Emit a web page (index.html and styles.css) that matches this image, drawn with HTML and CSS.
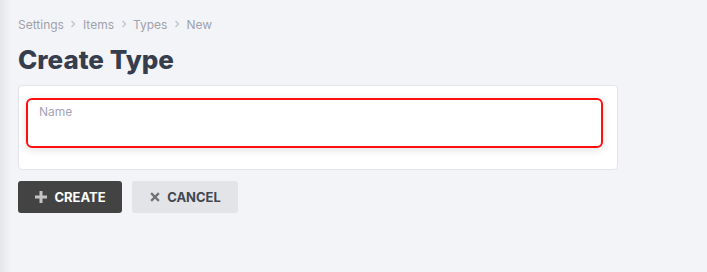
FILE: index.html
```html
<!DOCTYPE html>
<html>
<head>
<meta charset="utf-8">
<link rel="stylesheet" href="styles.css">
</head>
<body>
<div class="page">
  <nav class="crumbs">
    <span>Settings</span>
    <svg class="sep" viewBox="0 0 10 10"><path d="M3.5 2 L6.5 5 L3.5 8" fill="none" stroke="currentColor" stroke-width="1.3"/></svg>
    <span>Items</span>
    <svg class="sep" viewBox="0 0 10 10"><path d="M3.5 2 L6.5 5 L3.5 8" fill="none" stroke="currentColor" stroke-width="1.3"/></svg>
    <span>Types</span>
    <svg class="sep" viewBox="0 0 10 10"><path d="M3.5 2 L6.5 5 L3.5 8" fill="none" stroke="currentColor" stroke-width="1.3"/></svg>
    <span>New</span>
  </nav>
  <h1 class="title">Create Type</h1>
  <div class="card">
    <label class="field">
      <span class="label">Name</span>
    </label>
  </div>
  <div class="actions">
    <button class="btn btn-primary">
      <svg class="ico" viewBox="0 0 14 14"><path d="M7 1 V13 M1 7 H13" stroke="currentColor" stroke-width="3" fill="none"/></svg>
      CREATE
    </button>
    <button class="btn btn-secondary">
      <svg class="ico" viewBox="0 0 14 14"><path d="M2.5 2.5 L11.5 11.5 M11.5 2.5 L2.5 11.5" stroke="currentColor" stroke-width="2.6" fill="none"/></svg>
      CANCEL
    </button>
  </div>
</div>
</body>
</html>
```
FILE: styles.css
```css
html, body {
  margin: 0;
  height: 100%;
}
body {
  background: #f3f4f8;
  font-family: Inter, "Noto Sans", sans-serif;
  box-shadow: inset 12px 0 10px -8px rgba(0, 0, 0, 0.07);
}
.page {
  padding: 15px 18px 0 18px;
  width: 600px;
}
.crumbs {
  display: flex;
  align-items: center;
  gap: 4.5px;
  font-size: 12px;
  color: #a0a2ab;
  height: 18px;
}
.sep {
  width: 10px;
  height: 10px;
  color: #c0c2c8;
}
.title {
  margin: 11px 0 0 0;
  font-size: 26px;
  font-weight: 800;
  color: #363d4d;
  line-height: 32px;
  letter-spacing: 0;
}
.card {
  margin-top: 9px;
  background: #fff;
  border: 1px solid #e3e4e8;
  border-radius: 4px;
  padding: 12px 14px 21px 7px;
}
.field {
  display: block;
  box-sizing: border-box;
  height: 50px;
  border: 2px solid #ff1010;
  border-radius: 6px;
  box-shadow: 0 2px 8px rgba(0, 0, 0, 0.12);
  padding: 3px 11px 0 11px;
  line-height: 14px;
}
.label {
  font-size: 12px;
  color: #a6a3b8;
}
.actions {
  display: flex;
  gap: 10px;
  margin-top: 11px;
}
.btn {
  display: flex;
  align-items: center;
  justify-content: center;
  gap: 6px;
  height: 32px;
  border: none;
  border-radius: 3px;
  font-family: Inter, "Noto Sans", sans-serif;
  font-size: 13px;
  font-weight: 700;
  padding: 0;
}
.btn-primary {
  width: 104px;
  background: #434343;
  color: #fff;
}
.btn-primary .ico {
  color: #c4c4c4;
}
.btn-secondary {
  width: 106px;
  background: #e3e4e8;
  color: #424750;
}
.btn-secondary .ico {
  color: #707070;
  width: 12px;
  height: 12px;
}
.ico {
  width: 14px;
  height: 14px;
}
```
